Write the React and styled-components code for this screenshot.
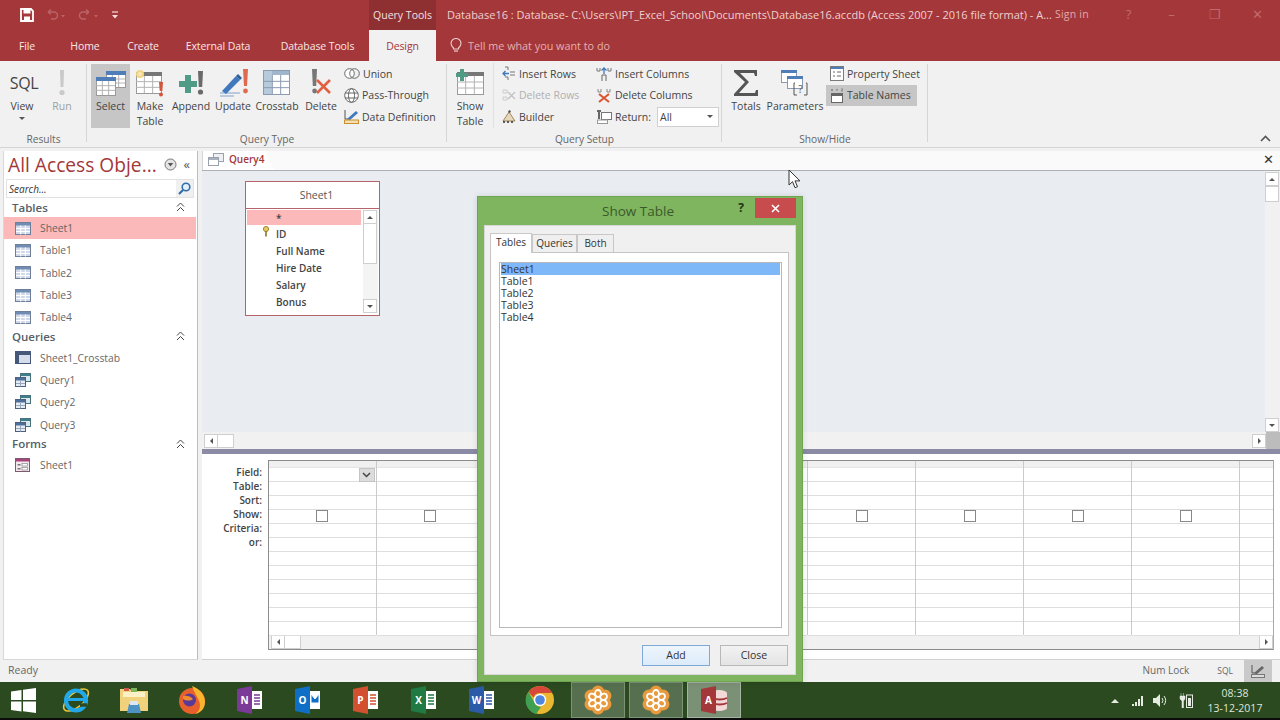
import { createGlobalStyle, styled } from "styled-components";

const GlobalStyle = createGlobalStyle`
  html, body { margin: 0; padding: 0; background: #f1f1f1; }
  * { box-sizing: border-box; }
  body { font-family: "Open Sans", "Liberation Sans", sans-serif; }
`;

const Page = styled.div`
  position: relative;
  width: 1280px;
  height: 720px;
  overflow: hidden;
  display: flex;
  flex-direction: column;
  background: #f1f1f1;
  color: #444;
  font-size: 11px;
`;

/* title bar */
const TitleBar = styled.div`
  height: 30px;
  display: flex;
  background: #a4373a;
  color: #f0cfcf;
  font-size: 11px;
`;
const Qat = styled.div`
  width: 369px;
  flex-shrink: 0;
  display: flex;
  align-items: center;
  padding-left: 20px;
  gap: 11px;
`;
const ContextLabel = styled.div`
  width: 67px;
  height: 32px;
  flex-shrink: 0;
  line-height: 30px;
  text-align: center;
  color: #f5e0e0;
  background: #8e2f32;
  font-size: 10.5px;
`;
const WindowTitle = styled.div`
  width: 619px;
  flex-shrink: 0;
  padding-left: 11px;
  line-height: 29px;
  white-space: nowrap;
  overflow: hidden;
  font-size: 11px;
`;
const SignIn = styled.div`
  width: 52px;
  flex-shrink: 0;
  line-height: 29px;
  color: #e2a9a9;
  font-size: 10.5px;
  letter-spacing: 0.2px;
`;
const WinControls = styled.div`
  flex: 1;
  display: flex;
  color: #c26a6a;
  & > span {
    width: 43px;
    display: flex;
    align-items: center;
    justify-content: center;
    height: 28px;
    font-size: 13px;
  }
`;

/* tabs */
const TabRow = styled.div`
  height: 31px;
  display: flex;
  background: #a4373a;
`;
const RibbonTab = styled.div`
  width: ${(p) => p.$w}px;
  text-align: center;
  line-height: 32px;
  font-size: 10.5px;
  letter-spacing: -0.1px;
  color: ${(p) => (p.$active ? "#a4373a" : "#f8e6e6")};
  background: ${(p) => (p.$active ? "#f1f1f1" : "transparent")};
`;
const TellMe = styled.div`
  display: flex;
  align-items: center;
  gap: 6px;
  margin-left: 14px;
  font-size: 10.8px;
  color: #e6b0b0;
`;

/* ribbon */
const Ribbon = styled.div`
  height: 87px;
  display: flex;
  background: #f1f1f1;
  border-bottom: 1px solid #d4d4d4;
  position: relative;
`;
const Group = styled.div`
  width: ${(p) => p.$w}px;
  display: flex;
  flex-direction: column;
  position: relative;
  &::after {
    content: "";
    position: absolute;
    right: 0;
    top: 3px;
    bottom: 5px;
    width: 1px;
    background: #d6d6d6;
  }
`;
const GroupBody = styled.div`
  height: 68px;
  padding: 3px 0 0 ${(p) => p.$pad || 0}px;
  display: flex;
`;
const GroupLabel = styled.div`
  text-align: center;
  line-height: 22px;
  font-size: 10.2px;
  color: #666;
`;
const LargeBtn = styled.div`
  width: ${(p) => p.$w}px;
  height: 64px;
  display: flex;
  flex-direction: column;
  align-items: center;
  padding-top: 3px;
  text-align: center;
  line-height: 15px;
  font-size: 10.5px;
  color: ${(p) => (p.$off ? "#a0a0a0" : "#444")};
  background: ${(p) => (p.$active ? "#c6c6c6" : "transparent")};
`;
const IconSlot = styled.div`
  height: 32px;
  flex-shrink: 0;
  display: flex;
  align-items: center;
  justify-content: center;
`;
const SqlMark = styled.div`
  font-size: 16px;
  line-height: 26px;
  margin-left: 4px;
  color: #444;
  letter-spacing: -0.3px;
`;
const SmallCol = styled.div`
  width: ${(p) => p.$w}px;
  margin-left: ${(p) => p.$ml || 0}px;
  margin-top: -1px;
  display: flex;
  flex-direction: column;
  ${(p) => p.$line && "border-left: 1px solid #e0e0e0;"}
`;
const SmallBtn = styled.div`
  height: 21.5px;
  display: flex;
  align-items: center;
  gap: 3px;
  padding-left: ${(p) => p.$pad || 2}px;
  white-space: nowrap;
  font-size: 10.5px;
  color: ${(p) => (p.$off ? "#b0b0b0" : "#444")};
  background: ${(p) => (p.$active ? "#c6c6c6" : "transparent")};
`;
const ReturnBox = styled.div`
  width: 62px;
  height: 20px;
  margin-left: 3px;
  padding: 0 5px 0 2px;
  background: #fff;
  border: 1px solid #d0d0d0;
  display: flex;
  align-items: center;
  justify-content: space-between;
  &::after {
    content: "";
    border: 3px solid transparent;
    border-top-color: #555;
    margin-top: 3px;
  }
`;
const Collapse = styled.div`
  position: absolute;
  right: 9px;
  bottom: 5px;
`;

/* main */
const Main = styled.div`
  height: 512px;
  display: flex;
  padding-top: 3px;
  background: #f1f1f1;
`;
const Nav = styled.div`
  width: 195px;
  margin-left: 3px;
  background: #fff;
  border-left: 1px solid #d8d8d8;
  border-right: 1px solid #bdbdbd;
  border-bottom: 1px solid #d8d8d8;
  display: flex;
  flex-direction: column;
`;
const NavHead = styled.div`
  height: 25px;
  display: flex;
  align-items: center;
  padding: 1px 7px 0 4px;
  color: #a4373a;
  font-size: 19.2px;
  white-space: nowrap;
  justify-content: space-between;
`;
const NavTools = styled.div`
  display: flex;
  align-items: center;
  gap: 7px;
  color: #555;
  font-size: 13px;
`;
const SearchBox = styled.div`
  height: 19px;
  margin: 3px 3px 1px 2px;
  border: 1px solid #e2e2e2;
  display: flex;
  align-items: center;
  justify-content: space-between;
  padding-left: 2px;
  font-size: 10px;
  font-style: italic;
  color: #333;
`;
const SearchBtn = styled.div`
  width: 17px;
  height: 17px;
  background: #f0f0f0;
  display: flex;
  align-items: center;
  justify-content: center;
`;
const NavGroup = styled.div`
  height: 18px;
  display: flex;
  align-items: center;
  justify-content: space-between;
  padding: 0 12px 2px 8px;
  font-size: 11.5px;
  font-weight: 600;
  color: #55606a;
`;
const NavItem = styled.div`
  height: 22.3px;
  display: flex;
  align-items: center;
  gap: 9px;
  margin-right: 1px;
  padding-left: 11px;
  font-size: 10.3px;
  color: #666;
  background: ${(p) => (p.$active ? "#fbb9ba" : "transparent")};
`;
const Gutter = styled.div`
  width: 4px;
  flex-shrink: 0;
`;
const Doc = styled.div`
  flex: 1;
  display: flex;
  flex-direction: column;
  min-width: 0;
`;
const DocTabs = styled.div`
  height: 19px;
  display: flex;
  justify-content: space-between;
  align-items: center;
  background: #fafafa;
  padding: 0 6px 3px 0;
  flex-shrink: 0;
  color: #333;
  font-size: 13px;
`;
const DocTab = styled.div`
  display: flex;
  align-items: center;
  gap: 5px;
  width: 72px;
  height: 19px;
  margin-bottom: -3px;
  padding: 0 0 3px 5px;
  background: #fff;
  border-left: 1px solid #d4d4d4;
  color: #a4373a;
  font-size: 10px;
  font-weight: 600;
  clip-path: polygon(0 0, 88% 0, 100% 100%, 0 100%);
`;
const UpperPane = styled.div`
  height: 262px;
  display: flex;
  border-top: 1px solid #adb0b6;
  flex-shrink: 0;
`;
const Canvas = styled.div`
  position: relative;
  flex: 1;
  background: #e9ecf1;
`;
const VScroll = styled.div`
  width: 15px;
  background: #f1f1f1;
  display: flex;
  flex-direction: column;
  justify-content: space-between;
  padding-top: 1px;
`;
const ScrollBtn = styled.div`
  width: ${(p) => p.$w || 14}px;
  height: ${(p) => p.$h || 14}px;
  background: #fff;
  border: 1px solid #cfcfcf;
  display: flex;
  align-items: center;
  justify-content: center;
  flex-shrink: 0;
`;
const Arrow = styled.span`
  width: 0;
  height: 0;
  border: ${(p) => p.$s || 3}px solid transparent;
  ${(p) => (p.$dir === "up" ? `border-bottom-color: ${p.$c || "#555"}; margin-top: -3px;` : "")}
  ${(p) => (p.$dir === "down" ? "border-top-color: #555; margin-top: 3px;" : "")}
  ${(p) => (p.$dir === "left" ? "border-right-color: #555; margin-left: -3px;" : "")}
  ${(p) => (p.$dir === "right" ? "border-left-color: #555; margin-left: 3px;" : "")}
`;
const HScroll = styled.div`
  height: 17px;
  display: flex;
  align-items: center;
  padding-left: 2px;
  background: #f1f1f1;
  flex-shrink: 0;
`;
const ThumbH = styled.div`
  width: 16px;
  height: 14px;
  background: #fff;
  border: 1px solid #cfcfcf;
  border-left: none;
`;
const Grow = styled.div`
  flex: 1;
`;
const ScrollCorner = styled.div`
  width: 14px;
  height: 17px;
  background: #bcbcbc;
`;
const Splitter = styled.div`
  height: 5px;
  background: #8b8ba6;
  flex-shrink: 0;
`;
const LowerPane = styled.div`
  flex: 1;
  display: flex;
  background: #fff;
  padding-top: 6px;
  border-bottom: 1px solid #d0d0d0;
`;
const RowLabels = styled.div`
  width: 60px;
  padding-top: 5px;
  margin-right: 6px;
  text-align: right;
  & > div {
    height: 14px;
    line-height: 14px;
    font-size: 10px;
    font-weight: 600;
    color: #444;
  }
`;
const GridBox = styled.div`
  width: 1006px;
  height: 190px;
  border: 1px solid #8c8c8c;
  border-right-color: #aaa;
  display: flex;
  flex-direction: column;
  overflow: hidden;
`;
const GridCols = styled.div`
  height: 174px;
  display: flex;
  flex-shrink: 0;
`;
const GridCol = styled.div`
  width: 107.9px;
  flex-shrink: 0;
  border-right: 1px solid #cacaca;
  &::before {
    content: "";
    display: block;
    height: 6px;
    background: #f0f0f0;
    border-bottom: 1px solid #e4e4e4;
  }
`;
const GridCell = styled.div`
  position: relative;
  height: 14px;
  border-bottom: 1px solid #dedede;
  display: flex;
  align-items: center;
  justify-content: center;
`;
const Check = styled.span`
  width: 12px;
  height: 12px;
  margin-top: -1px;
  border: 1px solid #888;
  background: #fff;
`;
const ComboBtn = styled.span`
  position: absolute;
  right: 1px;
  top: 0;
  width: 16px;
  height: 14px;
  background: #dcdcdc;
  border: 1px solid #c4c4c4;
  display: flex;
  align-items: center;
  justify-content: center;
`;
const GridScroll = styled.div`
  flex: 1;
  display: flex;
  align-items: center;
  justify-content: space-between;
  background: #f1f1f1;
  padding: 0 0 0 2px;
`;
const GridScrollLeft = styled.div`
  display: flex;
`;

/* field list on the design canvas */
const FieldBox = styled.div`
  position: absolute;
  left: 43px;
  top: 10px;
  width: 135px;
  height: 135px;
  background: #fff;
  border: 1.5px solid #b5646a;
`;
const FieldTitle = styled.div`
  height: 27px;
  line-height: 27px;
  padding-left: 8px;
  text-align: center;
  color: #555;
  font-size: 10.5px;
  border-bottom: 1.5px solid #b5646a;
`;
const FieldBody = styled.div`
  display: flex;
  padding: 1px 1px 0 1px;
`;
const FieldRows = styled.div`
  flex: 1;
`;
const FieldRow = styled.div`
  height: 17px;
  display: flex;
  align-items: center;
  padding-left: 29px;
  position: relative;
  font-size: 10px;
  font-weight: 600;
  color: #444;
  &:first-child {
    height: 15px;
    background: #fbb9ba;
  }
`;
const KeyMark = styled.span`
  position: absolute;
  left: 15px;
  top: 1px;
`;
const FieldScroll = styled.div`
  width: 15px;
  background: #f4f4f4;
  display: flex;
  flex-direction: column;
  justify-content: space-between;
  margin-left: 2px;
  height: 103px;
`;
const FieldThumb = styled.div`
  width: 14px;
  height: 41px;
  background: #fff;
  border: 1px solid #cfcfcf;
  margin-top: -1px;
`;
const FieldScrollTop = styled.div`
  display: flex;
  flex-direction: column;
`;

/* status and taskbar */
const StatusBar = styled.div`
  height: 22px;
  display: flex;
  align-items: center;
  padding: 0 0 2px 8px;
  font-size: 10.5px;
  color: #666;
  background: #f1f1f1;
`;
const StatusRight = styled.div`
  margin-left: auto;
  display: flex;
  align-items: center;
`;
const StatusText = styled.span`
  font-size: 10px;
`;
const StatusSql = styled.span`
  margin-left: 28px;
  font-size: 8.5px;
`;
const ViewBtn = styled.div`
  width: 28px;
  height: 22px;
  margin: 0 8px -2px 11px;
  background: #c9c9c9;
  display: flex;
  align-items: center;
  justify-content: center;
`;
const Taskbar = styled.div`
  height: 38px;
  display: flex;
  background: #2b4a20;
  border-bottom: 2px solid #0c0c0c;
  color: #dfe6da;
`;
const StartBtn = styled.div`
  width: 47px;
  display: flex;
  align-items: center;
  padding-left: 11px;
`;
const TaskItem = styled.div`
  width: 58px;
  display: flex;
  align-items: center;
  justify-content: center;
  &[data-open="true"] > span {
    width: 54px;
    height: 36px;
    display: flex;
    align-items: center;
    justify-content: center;
    background: #56704f;
    border: 1px solid #7d9277;
  }
  &[data-focus="true"] > span {
    background: #7b9176;
    border-color: #a5b5a1;
  }
`;
const Tray = styled.div`
  margin-left: auto;
  display: flex;
  align-items: center;
`;
const TrayCaret = styled.span`
  margin-right: 12px;
  display: flex;
`;
const TrayGap = styled.span`
  width: ${(p) => p.$w}px;
`;
const Clock = styled.div`
  width: 78px;
  margin: 1px 6px 0 3px;
  text-align: center;
  font-size: 10.5px;
  line-height: 15px;
`;

/* dialog */
const Dialog = styled.div`
  position: absolute;
  left: 477px;
  top: 196px;
  width: 326px;
  height: 486px;
  background: #7fb55e;
  border: 1px solid #6fa551;
  padding: 0 6px 6px 6px;
  display: flex;
  flex-direction: column;
  box-shadow: 0 0 6px rgba(0, 0, 0, 0.12);
`;
const DlgHead = styled.div`
  height: 28px;
  display: flex;
  align-items: center;
  position: relative;
  color: #3a5a2a;
  font-size: 13.5px;
  justify-content: center;
  padding-right: 4px;
  flex-shrink: 0;
`;
const DlgHelp = styled.span`
  position: absolute;
  right: 52px;
  top: 2px;
  font-size: 12px;
  font-weight: 700;
  color: #22331a;
`;
const DlgClose = styled.span`
  position: absolute;
  right: 0;
  top: 1px;
  width: 41px;
  height: 20px;
  background: #c84c4e;
  display: flex;
  align-items: center;
  justify-content: center;
`;
const DlgBody = styled.div`
  flex: 1;
  background: #f0f0f0;
  border: 1px solid #d8d8d8;
  padding: 7px 5px 0 5px;
  display: flex;
  flex-direction: column;
`;
const DlgTabs = styled.div`
  display: flex;
  align-items: flex-end;
  height: 19px;
  flex-shrink: 0;
`;
const DlgTab = styled.div`
  width: ${(p) => p.$w}px;
  height: ${(p) => (p.$active ? 20 : 18)}px;
  line-height: 17px;
  text-align: center;
  font-size: 10px;
  color: #333;
  border: 1px solid #c8c8c8;
  border-bottom: none;
  margin-bottom: ${(p) => (p.$active ? -1 : 0)}px;
  position: relative;
  background: ${(p) => (p.$active ? "#fff" : "#efefef")};
`;
const DlgPanel = styled.div`
  width: 299px;
  height: 384px;
  background: #fff;
  border: 1px solid #c4c4c4;
  padding: 9px 6px 7px 8px;
  flex-shrink: 0;
`;
const TableList = styled.div`
  height: 100%;
  border: 1px solid #b8b8b8;
  padding: 0 1px;
`;
const ListRow = styled.div`
  height: 12.1px;
  line-height: 12px;
  font-size: 10.5px;
  color: #333;
  background: ${(p) => (p.$active ? "#7fb8f8" : "transparent")};
`;
const DlgButtons = styled.div`
  display: flex;
  justify-content: flex-end;
  gap: 10px;
  margin-top: 9px;
  width: 298px;
`;
const DlgButton = styled.div`
  width: 68px;
  height: 21px;
  line-height: 19px;
  text-align: center;
  font-size: 10.5px;
  color: #333;
  border: 1px solid ${(p) => (p.$primary ? "#7fa9d8" : "#b8b8b8")};
  background: ${(p) =>
    p.$primary
      ? "linear-gradient(#eef5fc, #dcebfa)"
      : "linear-gradient(#f2f2f2, #e4e4e4)"};
`;
const Pointer = styled.svg`
  position: absolute;
  left: 788px;
  top: 169px;
`;

/* drawings */
const BaseSvg = styled.svg`
  display: block;
  flex-shrink: 0;
`;
const Svg = ({ w = 16, h = 16, vb, children }) => (
  <BaseSvg width={w} height={h} viewBox={vb || `0 0 ${w} ${h}`}>
    {children}
  </BaseSvg>
);

const gridLines = (x, y, w, h, cols, rows, stroke = "#9a9a9a") => {
  const out = [];
  for (let i = 1; i < cols; i++) {
    const px = x + (w * i) / cols;
    out.push(<line key={"c" + i} x1={px} y1={y} x2={px} y2={y + h} stroke={stroke} strokeWidth="1" />);
  }
  for (let i = 1; i < rows; i++) {
    const py = y + (h * i) / rows;
    out.push(<line key={"r" + i} x1={x} y1={py} x2={x + w} y2={py} stroke={stroke} strokeWidth="1" />);
  }
  return out;
};

const MiniTable = ({ x, y, w, h, head = "#7a7a7a", cols = 3, rows = 3, fill = "#fff" }) => (
  <g>
    <rect x={x + 0.5} y={y + 0.5} width={w} height={h} fill={fill} stroke="#9a9a9a" />
    <rect x={x} y={y} width={w + 1} height={4} fill={head} />
    {gridLines(x, y + 4, w, h - 4, cols, rows, "#b4b4b4")}
  </g>
);

const NavTableIcon = () => (
  <Svg w={16} h={13}>
    <rect x="0.5" y="0.5" width="15" height="12" fill="#cfd9ea" stroke="#6f7f9a" />
    <rect x="1" y="1" width="14" height="2.5" fill="#6f8cb4" />
    {gridLines(1, 3.5, 14, 9, 3, 3, "#ffffff")}
  </Svg>
);
const NavCrosstabIcon = () => (
  <Svg w={16} h={13}>
    <rect x="0.5" y="0.5" width="15" height="12" fill="#d5dcea" stroke="#46587a" />
    <rect x="1" y="1" width="14" height="3" fill="#46587a" />
    <rect x="1" y="4" width="3" height="8" fill="#46587a" />
  </Svg>
);
const NavQueryIcon = () => (
  <Svg w={16} h={14}>
    <rect x="5.5" y="0.5" width="10" height="8" fill="#dbe7ea" stroke="#47727c" />
    <rect x="6" y="1" width="9" height="2" fill="#3f7f8a" />
    <rect x="0.5" y="4.5" width="10" height="9" fill="#e6ecf4" stroke="#4f607c" />
    <rect x="1" y="5" width="9" height="2.5" fill="#4f6f9a" />
    {gridLines(1, 7.5, 9, 6, 2, 2, "#9aa8bc")}
  </Svg>
);
const NavFormIcon = () => (
  <Svg w={16} h={14}>
    <rect x="0.5" y="0.5" width="14" height="13" fill="#f4e9ef" stroke="#7d5a70" />
    <rect x="1" y="1" width="13" height="2.5" fill="#a8447c" />
    <rect x="2.5" y="6" width="3" height="1.5" fill="#777" />
    <rect x="7" y="5.5" width="5.5" height="2.5" fill="#fff" stroke="#777" strokeWidth=".6" />
    <rect x="2.5" y="10" width="3" height="1.5" fill="#777" />
    <rect x="7" y="9.5" width="5.5" height="2.5" fill="#fff" stroke="#777" strokeWidth=".6" />
  </Svg>
);
const RunIcon = ({ c = "#c9c9c9", w = 8, h = 26 }) => (
  <Svg w={w} h={h} vb="0 0 8 26">
    <path d="M2 0h4l-.6 17H2.6z" fill={c} />
    <circle cx="4" cy="22.5" r="2.6" fill={c} />
  </Svg>
);
const SelectIcon = () => (
  <Svg w={32} h={26}>
    <MiniTable x={11} y={1} w={19} h={16} head="#4f7db8" />
    <MiniTable x={1} y={7} w={19} h={18} head="#4f7db8" />
  </Svg>
);
const MakeTableIcon = () => (
  <Svg w={32} h={28}>
    <MiniTable x={2} y={3} w={25} h={21} head="#777" />
    <circle cx="6" cy="5" r="4" fill="#f3d684" />
    <circle cx="6" cy="5" r="2" fill="#f8e8b8" />
    <path d="M25 13h4l-.7 9h-2.6z" fill="#d2563c" />
    <circle cx="27" cy="25.5" r="2" fill="#d2563c" />
  </Svg>
);
const AppendIcon = () => (
  <Svg w={28} h={26}>
    <path d="M7 6h6v6h6v6h-6v6H7v-6H1v-6h6z" transform="translate(1 -1)" fill="#4f9b86" />
    <path d="M21 1h5l-.8 16h-3.4z" fill="#6a6a6a" />
    <circle cx="23.5" cy="22" r="2.6" fill="#6a6a6a" />
  </Svg>
);
const UpdateIcon = () => (
  <Svg w={32} h={28}>
    <path d="M3 24h20M3 27h14" stroke="#a9bcd8" strokeWidth="1.5" />
    <path d="M5 22 19 7l4 4L9 25z" fill="#3f78bc" />
    <path d="M19 7l2-2 4 4-2 2z" fill="#2f5f98" />
    <path d="M26 0h5l-1 17h-3z" fill="#e06a50" />
    <circle cx="28.5" cy="22" r="2.4" fill="#e06a50" />
  </Svg>
);
const CrosstabIcon = () => (
  <Svg w={28} h={26}>
    <rect x="0.5" y="0.5" width="26" height="24" fill="#fff" stroke="#8a9bb0" />
    <rect x="1" y="1" width="25" height="4" fill="#9fb6cd" />
    <rect x="1" y="1" width="8" height="23" fill="#b7cadc" />
    {gridLines(1, 5, 25, 19, 3, 3, "#8a9bb0")}
  </Svg>
);
const DeleteIcon = () => (
  <Svg w={22} h={28}>
    <path d="M2 0h5l-.8 17H2.800z" fill="#777" />
    <circle cx="4.600" cy="22" r="2.400" fill="#777" />
    <path d="M7 11 20 24M20 11 7 24" stroke="#e0603f" strokeWidth="2.6" />
  </Svg>
);
const ShowTableIcon = () => (
  <Svg w={30} h={28}>
    <MiniTable x={2} y={3} w={26} h={22} head="#777" />
    <path d="M5 0h4v4h4v4H9v4H5V8H1V4h4z" fill="#4f9b86" />
  </Svg>
);
const UnionIcon = () => (
  <Svg w={16} h={13}>
    <circle cx="5.5" cy="6.5" r="4.8" fill="#fff" stroke="#666" />
    <circle cx="10.5" cy="6.5" r="4.8" fill="none" stroke="#666" />
  </Svg>
);
const GlobeIcon = () => (
  <Svg w={15} h={15}>
    <circle cx="7.5" cy="7.5" r="6.8" fill="#fff" stroke="#666" />
    <ellipse cx="7.5" cy="7.5" rx="3" ry="6.8" fill="none" stroke="#666" />
    <path d="M1 5h13M1 10h13" stroke="#666" />
  </Svg>
);
const DefinitionIcon = () => (
  <Svg w={15} h={15}>
    <path d="M1 1v9h5" fill="none" stroke="#555" />
    <path d="M3 10 12 2l2 2-8 7z" fill="#3f78bc" />
    <rect x="0.5" y="11" width="14" height="3.5" fill="#f3dfb0" stroke="#c9902f" />
  </Svg>
);
const InsertRowsIcon = () => (
  <Svg w={14} h={15}>
    <path d="M3 1h3v3M3 11h3v3" fill="none" stroke="#777" />
    <path d="M7 7.5H1M3.5 5 1 7.5 3.5 10" fill="none" stroke="#3f78bc" strokeWidth="1.3" />
    <path d="M8 6h5M8 9h5" stroke="#777" />
  </Svg>
);
const DeleteRowsIcon = () => (
  <Svg w={14} h={15}>
    <path d="M1 2h4v3H1zM1 9h4v3H1z" fill="none" stroke="#ccc" />
    <path d="M6 4l7 7M13 4l-7 7" stroke="#c4c4c4" strokeWidth="1.5" />
  </Svg>
);
const BuilderIcon = () => (
  <Svg w={14} h={15}>
    <path d="M1 12 7 3l6 9z" fill="#e7d8bc" stroke="#8a6f3f" strokeWidth=".8" />
    <path d="M6 2l2-1 1 2-2 1z" fill="#555" />
    <path d="M1 13h2M5 13h2M9 13h2" stroke="#333" strokeWidth="1.4" />
  </Svg>
);
const InsertColsIcon = () => (
  <Svg w={16} h={14}>
    <path d="M1 1v3h3V1M12 1v3h3V1" fill="none" stroke="#777" />
    <path d="M8 7V1M5.5 3.5 8 1l2.5 2.5" fill="none" stroke="#3f78bc" strokeWidth="1.3" />
    <path d="M6 8v6M10 8v6M6 8h4" fill="none" stroke="#666" />
  </Svg>
);
const DeleteColsIcon = () => (
  <Svg w={16} h={15}>
    <path d="M2 1v3h3V1M11 1v3h3V1" fill="none" stroke="#888" />
    <path d="M3 6l10 8M13 6 3 14" stroke="#d9532f" strokeWidth="2" />
  </Svg>
);
const ReturnIcon = () => (
  <Svg w={16} h={15}>
    <path d="M1 1h4v2H4v7H2V3H1z" fill="#666" />
    <rect x="5.5" y="3.5" width="10" height="7" fill="#fff" stroke="#777" />
    <rect x="1.5" y="11" width="10" height="3.5" fill="#fff" stroke="#999" />
  </Svg>
);
const SigmaIcon = () => (
  <Svg w={26} h={28}>
    <path d="M1 1h23v6h-2l-1-3H7l9 9-10 11h16l1-3h2v6H1v-2l11-12L1 3z" fill="#555" />
  </Svg>
);
const ParametersIcon = () => (
  <Svg w={30} h={28}>
    <rect x="1.5" y="1.5" width="15" height="12" fill="#fff" stroke="#8a9bb0" />
    <rect x="1" y="1" width="16" height="3" fill="#4f7db8" />
    <rect x="7.5" y="7.5" width="15" height="12" fill="#fff" stroke="#8a9bb0" />
    <rect x="7" y="7" width="16" height="3" fill="#4f7db8" />
    <path d="M15 14h-1v12h3M26 14h1v12h-3" fill="none" stroke="#555" />
    <text x="20.5" y="24" fontSize="10" fontFamily="Open Sans" textAnchor="middle" fill="#555">?</text>
  </Svg>
);
const SheetIcon = () => (
  <Svg w={14} h={15}>
    <rect x="0.5" y="0.5" width="13" height="14" fill="#fff" stroke="#7a7a7a" />
    <rect x="1" y="1" width="12" height="2" fill="#4f7db8" />
    <path d="M3 6h2M7 6h4M3 10h2M7 10h4" stroke="#666" />
  </Svg>
);
const TableNamesIcon = () => (
  <Svg w={14} h={15}>
    <path d="M1 1l2 2M3 1 1 3M6 1l1 1 1-1M7 2v1M11 1h2l-2 2h2" fill="none" stroke="#777" strokeWidth=".7" />
    <rect x="1.5" y="5.5" width="11" height="9" fill="#fff" stroke="#666" />
    <rect x="2" y="6" width="10" height="2" fill="#666" />
  </Svg>
);
const SaveIcon = () => (
  <Svg w={14} h={14}>
    <path d="M1 1h10l2 2v10H1z" fill="none" stroke="#fff" strokeWidth="1.8" />
    <rect x="3.5" y="2" width="7" height="3.5" fill="#fff" />
    <rect x="4" y="8.5" width="6" height="4" fill="#fff" />
  </Svg>
);
const UndoIcon = ({ flip }) => (
  <Svg w={22} h={12}>
    <g transform={flip ? "translate(14 0) scale(-1 1)" : undefined}>
      <path d="M3 3h6a3.5 3.5 0 0 1 0 7H6M3 3l3-2.5M3 3l3 2.5" fill="none" stroke="#bb6467" strokeWidth="1.4" />
    </g>
    <path d="M16 6h4l-2 2.5z" fill="#bb6467" />
  </Svg>
);
const QatMore = () => (
  <Svg w={8} h={10}>
    <path d="M1 2h6" stroke="#f3dede" strokeWidth="1.2" />
    <path d="M1 5h6L4 8.5z" fill="#f3dede" />
  </Svg>
);
const BulbIcon = () => (
  <Svg w={12} h={15}>
    <path d="M3.5 10C2 8.5 1 7.5 1 5.5a5 5 0 0 1 10 0c0 2-1 3-2.5 4.5V11h-5z" fill="none" stroke="#f0d0d0" strokeWidth="1.1" />
    <path d="M4 13h4" stroke="#f0d0d0" strokeWidth="1.2" />
  </Svg>
);
const MagnifierIcon = () => (
  <Svg w={13} h={13}>
    <circle cx="8" cy="5" r="3.8" fill="#e6f0fa" stroke="#2f6ea8" strokeWidth="1.6" />
    <path d="M5 8 1 12" stroke="#2f6ea8" strokeWidth="2.2" />
  </Svg>
);
const DoubleUp = () => (
  <Svg w={9} h={10}>
    <path d="M1 4.5 4.5 1 8 4.5M1 9 4.5 5.5 8 9" fill="none" stroke="#444" strokeWidth="1" />
  </Svg>
);
const CaretUp = () => (
  <Svg w={11} h={7}>
    <path d="M1 6l4.5-4.5L10 6" fill="none" stroke="#555" strokeWidth="1.6" />
  </Svg>
);
const ChevronDown = () => (
  <Svg w={9} h={6}>
    <path d="M1 1l3.5 3.5L8 1" fill="none" stroke="#444" strokeWidth="1.5" />
  </Svg>
);
const NavMenuIcon = () => (
  <Svg w={13} h={13}>
    <circle cx="6.5" cy="6.5" r="5.5" fill="#e4e4e4" stroke="#777" />
    <path d="M3.8 5h5.4L6.5 8.5z" fill="#555" />
  </Svg>
);
const KeyIcon = () => (
  <Svg w={8} h={11}>
    <circle cx="4" cy="3" r="2.6" fill="#e8c95a" stroke="#8c7426" strokeWidth=".8" />
    <path d="M4 5v5.5" stroke="#8c7426" strokeWidth="1.6" />
  </Svg>
);
const QueryTabIcon = () => (
  <Svg w={16} h={13}>
    <rect x="5.5" y="0.5" width="10" height="8" fill="#eef0f2" stroke="#9aa3ad" />
    <rect x="0.5" y="4.5" width="10" height="8" fill="#fff" stroke="#9aa3ad" />
    <rect x="1" y="5" width="9" height="2" fill="#a9b2bc" />
  </Svg>
);

/* taskbar icons */
const WinLogo = () => (
  <Svg w={25} h={25}>
    <path d="M0 3.6 10.5 2v10H0zM12 1.8 25 0v12H12zM0 13.5h10.5v10L0 22zM12 13.5h13V25l-13-1.8z" fill="#fff" />
  </Svg>
);
const IeIcon = () => (
  <Svg w={30} h={30}>
    <ellipse cx="15" cy="15" rx="15" ry="7" transform="rotate(-40 15 15)" fill="none" stroke="#e8c53a" strokeWidth="1.6" />
    <circle cx="15" cy="15.5" r="10" fill="none" stroke="#22a7e8" strokeWidth="4.2" />
    <path d="M7 14.5h16" stroke="#22a7e8" strokeWidth="3" />
    <path d="M19 20l7 0" stroke="#2b4a20" strokeWidth="3.4" />
  </Svg>
);
const FolderIcon = () => (
  <Svg w={30} h={28}>
    <path d="M1 3h10l2 2h16v20H1z" fill="#f0d27c" />
    <rect x="5" y="2" width="5" height="3" fill="#d05a4a" />
    <rect x="12" y="2" width="6" height="4" fill="#7cb55a" />
    <rect x="4" y="6" width="22" height="5" fill="#fbf0c8" />
    <path d="M8 27l2-9h10l2 9z" fill="#4f93c4" />
    <rect x="11" y="15" width="8" height="4" fill="#d9e8f2" />
  </Svg>
);
const FirefoxIcon = () => (
  <Svg w={30} h={30}>
    <circle cx="15" cy="16" r="13" fill="#e8602c" />
    <path d="M15 1c8 3 13 9 13 16 0 6-4 11-10 12 5-3 6-8 4-13C20 11 17 7 15 1z" fill="#f9b52d" />
    <circle cx="12.5" cy="15" r="6.5" fill="#5a3a96" />
    <path d="M6 11c3-1 8 0 10 3-2 2-7 2-10 0z" fill="#f08a2e" />
  </Svg>
);
const OfficeIcon = ({ letter, c, dark, square }) => (
  <Svg w={30} h={30}>
    <path d="M2 4 17 1v28L2 26z" fill={c} />
    <rect x="17" y="6" width="10" height="18" fill="#fff" />
    {square
      ? <path d="M18 9h8v9h-8zM18 9l4 5 4-5" fill={dark} stroke="#fff" />
      : <path d="M19 10h6M19 13h6M19 16h6M19 19h6" stroke={dark} strokeWidth="1.6" />}
    <text x="9.5" y="19" fontSize="10" fontWeight="700" fontFamily="Open Sans" textAnchor="middle" fill="#fff">{letter}</text>
  </Svg>
);
const ChromeIcon = () => (
  <Svg w={30} h={30}>
    <circle cx="15" cy="15" r="14" fill="#e9b830" />
    <path d="M15 1a14 14 0 0 1 12.1 7H15a7 7 0 0 0-6.5 4.4L3.5 7A14 14 0 0 1 15 1z" fill="#d8483a" />
    <path d="M3.5 7l6 10.500a7 7 0 0 0 6.500 4.400L11 29A14 14 0 0 1 3.500 7z" fill="#3fa052" />
    <circle cx="15" cy="15" r="6.200" fill="#fff" />
    <circle cx="15" cy="15" r="4.800" fill="#4f86e0" />
  </Svg>
);
const FlowerIcon = () => (
  <Svg w={28} h={30}>
    <g fill="#e89a3c">
      {[0, 60, 120, 180, 240, 300].map((a) => (
        <ellipse key={a} cx="14" cy="7.500" rx="6.500" ry="7" transform={`rotate(${a} 14 15)`} />
      ))}
    </g>
    <g fill="none" stroke="#fff" strokeWidth="1.800">
      {[0, 60, 120, 180, 240, 300].map((a) => (
        <ellipse key={a} cx="14" cy="8.500" rx="3" ry="3.500" transform={`rotate(${a} 14 15)`} />
      ))}
    </g>
  </Svg>
);
const AccessIcon = () => (
  <Svg w={30} h={30}>
    <ellipse cx="20" cy="8" rx="8" ry="3" fill="#f4d8d8" />
    <rect x="12" y="8" width="16" height="15" fill="#f4d8d8" />
    <ellipse cx="20" cy="23" rx="8" ry="3" fill="#f4d8d8" />
    <path d="M14 13c3 2 10 2 14 0M14 18c3 2 10 2 14 0" fill="none" stroke="#a4373a" strokeWidth="1.800" />
    <path d="M2 4 17 1v28L2 26z" fill="#a4373a" />
    <text x="9.500" y="19" fontSize="10" fontWeight="700" fontFamily="Open Sans" textAnchor="middle" fill="#fff">A</text>
  </Svg>
);
const SignalIcon = () => (
  <Svg w={14} h={12}>
    <path d="M1 10h2v2H1zM4 8h2v4H4zM7 5h2v7H7zM10 2h2v10h-2z" fill="#e6ebe2" />
  </Svg>
);
const SpeakerIcon = () => (
  <Svg w={16} h={13}>
    <path d="M0 4h3l4-4v13L3 9H0z" fill="#e6ebe2" />
    <path d="M9 4a4 4 0 0 1 0 5M11 2a7 7 0 0 1 0 9" fill="none" stroke="#e6ebe2" />
  </Svg>
);
const BatteryIcon = () => (
  <Svg w={14} h={15}>
    <path d="M2 0v3M4.500 0v3M1 3h5v3L4.500 8v7H3V8L1 6z" fill="#e6ebe2" stroke="#e6ebe2" strokeWidth=".5" />
    <rect x="7.500" y="2" width="6" height="12.500" fill="none" stroke="#e6ebe2" />
    <rect x="9" y="5" width="3" height="8" fill="#e6ebe2" />
  </Svg>
);
const DesignViewIcon = () => (
  <Svg w={14} h={14}>
    <path d="M1 1v8h5" fill="none" stroke="#555" />
    <path d="M3 9 11 2l2 2-7 6z" fill="#666" />
    <rect x="0.500" y="10.500" width="13" height="3" fill="#dcdcdc" stroke="#777" />
  </Svg>
);

const gridRows = Array.from({ length: 12 }, (_, i) => i);
const gridCols = Array.from({ length: 10 }, (_, i) => i);

const navSections = [
  { name: "Tables", items: [["Sheet1", NavTableIcon, true], ["Table1", NavTableIcon], ["Table2", NavTableIcon], ["Table3", NavTableIcon], ["Table4", NavTableIcon]] },
  { name: "Queries", items: [["Sheet1_Crosstab", NavCrosstabIcon], ["Query1", NavQueryIcon], ["Query2", NavQueryIcon], ["Query3", NavQueryIcon]] },
  { name: "Forms", items: [["Sheet1", NavFormIcon]] },
];

const taskIcons = [
  [<IeIcon key="ie" />],
  [<FolderIcon key="folder" />],
  [<FirefoxIcon key="ff" />],
  [<OfficeIcon key="n" letter="N" c="#7b3a96" dark="#7b3a96" />],
  [<OfficeIcon key="o" letter="O" c="#0f6fc6" dark="#0f6fc6" square />],
  [<OfficeIcon key="p" letter="P" c="#d2502f" dark="#d2502f" />],
  [<OfficeIcon key="x" letter="X" c="#1f7a44" dark="#1f7a44" />],
  [<OfficeIcon key="w" letter="W" c="#2b5aa8" dark="#2b5aa8" />],
  [<ChromeIcon key="c" />],
  [<FlowerIcon key="f1" />, "open"],
  [<FlowerIcon key="f2" />, "open"],
  [<AccessIcon key="a" />, "focus"],
];

const App = () => {
  return (
    <Page>
      <GlobalStyle />
      <TitleBar>
        <Qat>
          <SaveIcon />
          <UndoIcon />
          <UndoIcon flip />
          <QatMore />
        </Qat>
        <ContextLabel>Query Tools</ContextLabel>
        <WindowTitle>Database16 : Database- C:\Users\IPT_Excel_School\Documents\Database16.accdb (Access 2007 - 2016 file format) - A...</WindowTitle>
        <SignIn>Sign in</SignIn>
        <WinControls>
          <span>?</span>
          <span>–</span>
          <span>❐</span>
          <span>✕</span>
        </WinControls>
      </TitleBar>

      <TabRow>
        <RibbonTab $w={54}>File</RibbonTab>
        <RibbonTab $w={62}>Home</RibbonTab>
        <RibbonTab $w={54}>Create</RibbonTab>
        <RibbonTab $w={96}>External Data</RibbonTab>
        <RibbonTab $w={103}>Database Tools</RibbonTab>
        <RibbonTab $w={67} $active>Design</RibbonTab>
        <TellMe><BulbIcon />Tell me what you want to do</TellMe>
      </TabRow>

      <Ribbon>
        <Group $w={87}>
          <GroupBody>
            <LargeBtn $w={44}>
              <IconSlot><SqlMark>SQL</SqlMark></IconSlot>
              View
              <Arrow $dir="down" />
            </LargeBtn>
            <LargeBtn $w={36} $off>
              <IconSlot><RunIcon /></IconSlot>
              Run
            </LargeBtn>
          </GroupBody>
          <GroupLabel>Results</GroupLabel>
        </Group>
        <Group $w={360}>
          <GroupBody $pad={4}>
            <LargeBtn $w={39} $active><IconSlot><SelectIcon /></IconSlot>Select</LargeBtn>
            <LargeBtn $w={40}><IconSlot><MakeTableIcon /></IconSlot>Make<br />Table</LargeBtn>
            <LargeBtn $w={42}><IconSlot><AppendIcon /></IconSlot>Append</LargeBtn>
            <LargeBtn $w={42}><IconSlot><UpdateIcon /></IconSlot>Update</LargeBtn>
            <LargeBtn $w={46}><IconSlot><CrosstabIcon /></IconSlot>Crosstab</LargeBtn>
            <LargeBtn $w={42}><IconSlot><DeleteIcon /></IconSlot>Delete</LargeBtn>
            <SmallCol $w={102}>
              <SmallBtn><UnionIcon />Union</SmallBtn>
              <SmallBtn><GlobeIcon />Pass-Through</SmallBtn>
              <SmallBtn><DefinitionIcon />Data Definition</SmallBtn>
            </SmallCol>
          </GroupBody>
          <GroupLabel>Query Type</GroupLabel>
        </Group>
        <Group $w={275}>
          <GroupBody>
            <LargeBtn $w={46}><IconSlot><ShowTableIcon /></IconSlot>Show<br />Table</LargeBtn>
            <SmallCol $w={101} $line>
              <SmallBtn $pad={8}><InsertRowsIcon />Insert Rows</SmallBtn>
              <SmallBtn $pad={8} $off><DeleteRowsIcon />Delete Rows</SmallBtn>
              <SmallBtn $pad={8}><BuilderIcon />Builder</SmallBtn>
            </SmallCol>
            <SmallCol $w={128}>
              <SmallBtn><InsertColsIcon />Insert Columns</SmallBtn>
              <SmallBtn><DeleteColsIcon />Delete Columns</SmallBtn>
              <SmallBtn><ReturnIcon />Return:<ReturnBox>All</ReturnBox></SmallBtn>
            </SmallCol>
          </GroupBody>
          <GroupLabel>Query Setup</GroupLabel>
        </Group>
        <Group $w={206}>
          <GroupBody $pad={2}>
            <LargeBtn $w={44}><IconSlot><SigmaIcon /></IconSlot>Totals</LargeBtn>
            <LargeBtn $w={54}><IconSlot><ParametersIcon /></IconSlot>Parameters</LargeBtn>
            <SmallCol $w={91} $ml={4}>
              <SmallBtn $pad={4}><SheetIcon />Property Sheet</SmallBtn>
              <SmallBtn $pad={4} $active><TableNamesIcon />Table Names</SmallBtn>
            </SmallCol>
          </GroupBody>
          <GroupLabel>Show/Hide</GroupLabel>
        </Group>
        <Collapse><CaretUp /></Collapse>
      </Ribbon>

      <Main>
        <Nav>
          <NavHead>
            All Access Obje...
            <NavTools><NavMenuIcon />«</NavTools>
          </NavHead>
          <SearchBox>
            Search...
            <SearchBtn><MagnifierIcon /></SearchBtn>
          </SearchBox>
          {navSections.map((section) => (
            <div key={section.name}>
              <NavGroup>{section.name}<DoubleUp /></NavGroup>
              {section.items.map(([label, Icon, active]) => (
                <NavItem key={label} $active={active}>
                  <Icon />
                  {label}
                </NavItem>
              ))}
            </div>
          ))}
        </Nav>
        <Gutter />
        <Doc>
          <DocTabs>
            <DocTab><QueryTabIcon />Query4</DocTab>
            ✕
          </DocTabs>
          <UpperPane>
            <Canvas>
              <FieldBox>
                <FieldTitle>Sheet1</FieldTitle>
                <FieldBody>
                  <FieldRows>
                    <FieldRow>*</FieldRow>
                    <FieldRow><KeyMark><KeyIcon /></KeyMark>ID</FieldRow>
                    <FieldRow>Full Name</FieldRow>
                    <FieldRow>Hire Date</FieldRow>
                    <FieldRow>Salary</FieldRow>
                    <FieldRow>Bonus</FieldRow>
                  </FieldRows>
                  <FieldScroll>
                    <FieldScrollTop>
                      <ScrollBtn><Arrow $dir="up" /></ScrollBtn>
                      <FieldThumb />
                    </FieldScrollTop>
                    <ScrollBtn><Arrow $dir="down" /></ScrollBtn>
                  </FieldScroll>
                </FieldBody>
              </FieldBox>
            </Canvas>
            <VScroll>
              <div>
                <ScrollBtn><Arrow $dir="up" /></ScrollBtn>
                <ScrollBtn $h={16} />
              </div>
              <ScrollBtn><Arrow $dir="down" /></ScrollBtn>
            </VScroll>
          </UpperPane>
          <HScroll>
            <ScrollBtn><Arrow $dir="left" /></ScrollBtn>
            <ThumbH />
            <Grow />
            <ScrollBtn><Arrow $dir="right" /></ScrollBtn>
            <ScrollCorner />
          </HScroll>
          <Splitter />
          <LowerPane>
            <RowLabels>
              <div>Field:</div>
              <div>Table:</div>
              <div>Sort:</div>
              <div>Show:</div>
              <div>Criteria:</div>
              <div>or:</div>
            </RowLabels>
            <GridBox>
              <GridCols>
                {gridCols.map((col) => (
                  <GridCol key={col}>
                    {gridRows.map((row) => (
                      <GridCell key={row}>
                        {row === 0 && col === 0 && <ComboBtn><ChevronDown /></ComboBtn>}
                        {row === 3 && col < 9 && <Check />}
                      </GridCell>
                    ))}
                  </GridCol>
                ))}
              </GridCols>
              <GridScroll>
                <GridScrollLeft>
                  <ScrollBtn><Arrow $dir="left" /></ScrollBtn>
                  <ThumbH />
                </GridScrollLeft>
                <ScrollBtn><Arrow $dir="right" /></ScrollBtn>
              </GridScroll>
            </GridBox>
          </LowerPane>
        </Doc>
      </Main>

      <StatusBar>
        Ready
        <StatusRight>
          <StatusText>Num Lock</StatusText>
          <StatusSql>SQL</StatusSql>
          <ViewBtn><DesignViewIcon /></ViewBtn>
        </StatusRight>
      </StatusBar>

      <Taskbar>
        <StartBtn><WinLogo /></StartBtn>
        {taskIcons.map(([icon, state], i) => (
          <TaskItem key={i} data-open={Boolean(state)} data-focus={state === "focus"}>
            {state ? <span>{icon}</span> : icon}
          </TaskItem>
        ))}
        <Tray>
          <TrayCaret><Arrow $dir="up" $s={4} $c="#e6ebe2" /></TrayCaret>
          <SignalIcon />
          <TrayGap $w={8} />
          <SpeakerIcon />
          <TrayGap $w={10} />
          <BatteryIcon />
          <Clock>08:38<br />13-12-2017</Clock>
        </Tray>
      </Taskbar>

      <Dialog>
        <DlgHead>
          Show Table
          <DlgHelp>?</DlgHelp>
          <DlgClose>
            <Svg w={9} h={9}><path d="M1 1l7 7M8 1 1 8" stroke="#fff" strokeWidth="1.6" /></Svg>
          </DlgClose>
        </DlgHead>
        <DlgBody>
          <DlgTabs>
            <DlgTab $w={42} $active>Tables</DlgTab>
            <DlgTab $w={45}>Queries</DlgTab>
            <DlgTab $w={37}>Both</DlgTab>
          </DlgTabs>
          <DlgPanel>
            <TableList>
              <ListRow $active>Sheet1</ListRow>
              <ListRow>Table1</ListRow>
              <ListRow>Table2</ListRow>
              <ListRow>Table3</ListRow>
              <ListRow>Table4</ListRow>
            </TableList>
          </DlgPanel>
          <DlgButtons>
            <DlgButton $primary>Add</DlgButton>
            <DlgButton>Close</DlgButton>
          </DlgButtons>
        </DlgBody>
      </Dialog>

      <Pointer width="14" height="20" viewBox="0 0 14 20">
        <path d="M1 1v15l3.500-3.300 2.500 6 2.500-1-2.500-5.800H12z" fill="#fff" stroke="#333" strokeWidth="1" />
      </Pointer>
    </Page>
  );
};

export default App;
